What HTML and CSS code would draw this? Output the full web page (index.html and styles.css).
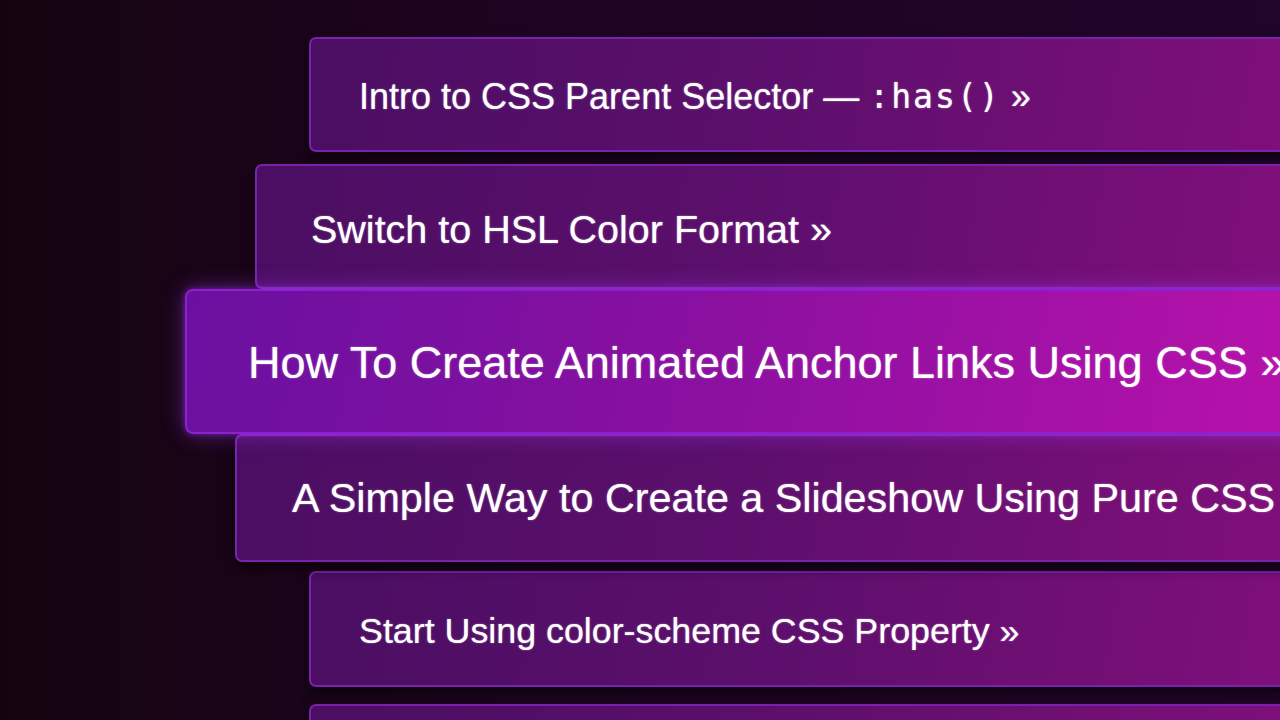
FILE: index.html
```html
<!DOCTYPE html>
<html lang="en">
<head>
<meta charset="utf-8">
<title>Articles</title>
<link rel="stylesheet" href="styles.css">
</head>
<body>
<nav class="list">
  <a class="card c1" href="#">Intro to CSS Parent Selector —&nbsp;<code>:has()</code>&nbsp;»</a>
  <a class="card c2" href="#">Switch to HSL Color Format&nbsp;»</a>
  <a class="card c3 active" href="#">How To Create Animated Anchor Links Using CSS&nbsp;»</a>
  <a class="card c4" href="#">A Simple Way to Create a Slideshow Using Pure CSS&nbsp;»</a>
  <a class="card c5" href="#">Start Using color-scheme CSS Property&nbsp;»</a>
  <a class="card c6" href="#" aria-label="More articles"></a>
</nav>
</body>
</html>
```
FILE: styles.css
```css
html, body {
  margin: 0;
  height: 720px;
  overflow: hidden;
}
body {
  background: linear-gradient(90deg, #150410 0%, #1d0420 40%, #21052a 100%);
  font-family: "Liberation Sans", Arial, sans-serif;
}
.list {
  display: flex;
  flex-direction: column;
  padding-top: 37px;
}
.card {
  display: flex;
  align-items: center;
  box-sizing: border-box;
  margin-right: -200px;
  border: 2px solid #7a22ad;
  border-radius: 7px;
  color: #fff;
  text-decoration: none;
  white-space: nowrap;
  background: linear-gradient(100deg, #4a0e62 0%, #5c0f6c 40%, #8c0f80 100%);
  box-shadow: 0 6px 12px rgba(0, 0, 0, 0.6);
  text-shadow: 0 0 1px rgba(255, 255, 255, 0.6), 0 0 3px rgba(255, 255, 255, 0.2);
  position: relative;
}
.card code {
  font-family: "DejaVu Sans Mono", monospace;
  font-size: 0.92em;
  letter-spacing: 0.06em;
}
.c1 {
  margin-left: 309px;
  height: 115px;
  padding: 4px 0 0 48px;
  font-size: 36px;
  z-index: 1;
}
.c2 {
  margin-top: 12px;
  margin-left: 255px;
  height: 125px;
  padding: 6px 0 0 54px;
  font-size: 39.5px;
  z-index: 2;
}
.c3 {
  margin-left: 185px;
  height: 145px;
  padding: 2px 0 0 61px;
  font-size: 45px;
  z-index: 4;
  border-color: #8f1fd0;
  border-radius: 8px;
  background: linear-gradient(100deg, #6a10a0 0%, #8a10a0 40%, #c412ae 100%);
  box-shadow: 0 0 22px rgba(170, 60, 255, 0.45), 0 0 6px rgba(170, 60, 255, 0.4);
}
.c4 {
  margin-left: 235px;
  height: 128px;
  padding: 0 0 0 55px;
  font-size: 41.3px;
  z-index: 3;
}
.c5 {
  margin-top: 9px;
  margin-left: 309px;
  height: 116px;
  padding: 4px 0 0 48px;
  font-size: 35.8px;
  z-index: 2;
}
.c6 {
  margin-top: 17px;
  margin-left: 309px;
  height: 115px;
  padding: 4px 0 0 48px;
  font-size: 36px;
  z-index: 1;
}
```
